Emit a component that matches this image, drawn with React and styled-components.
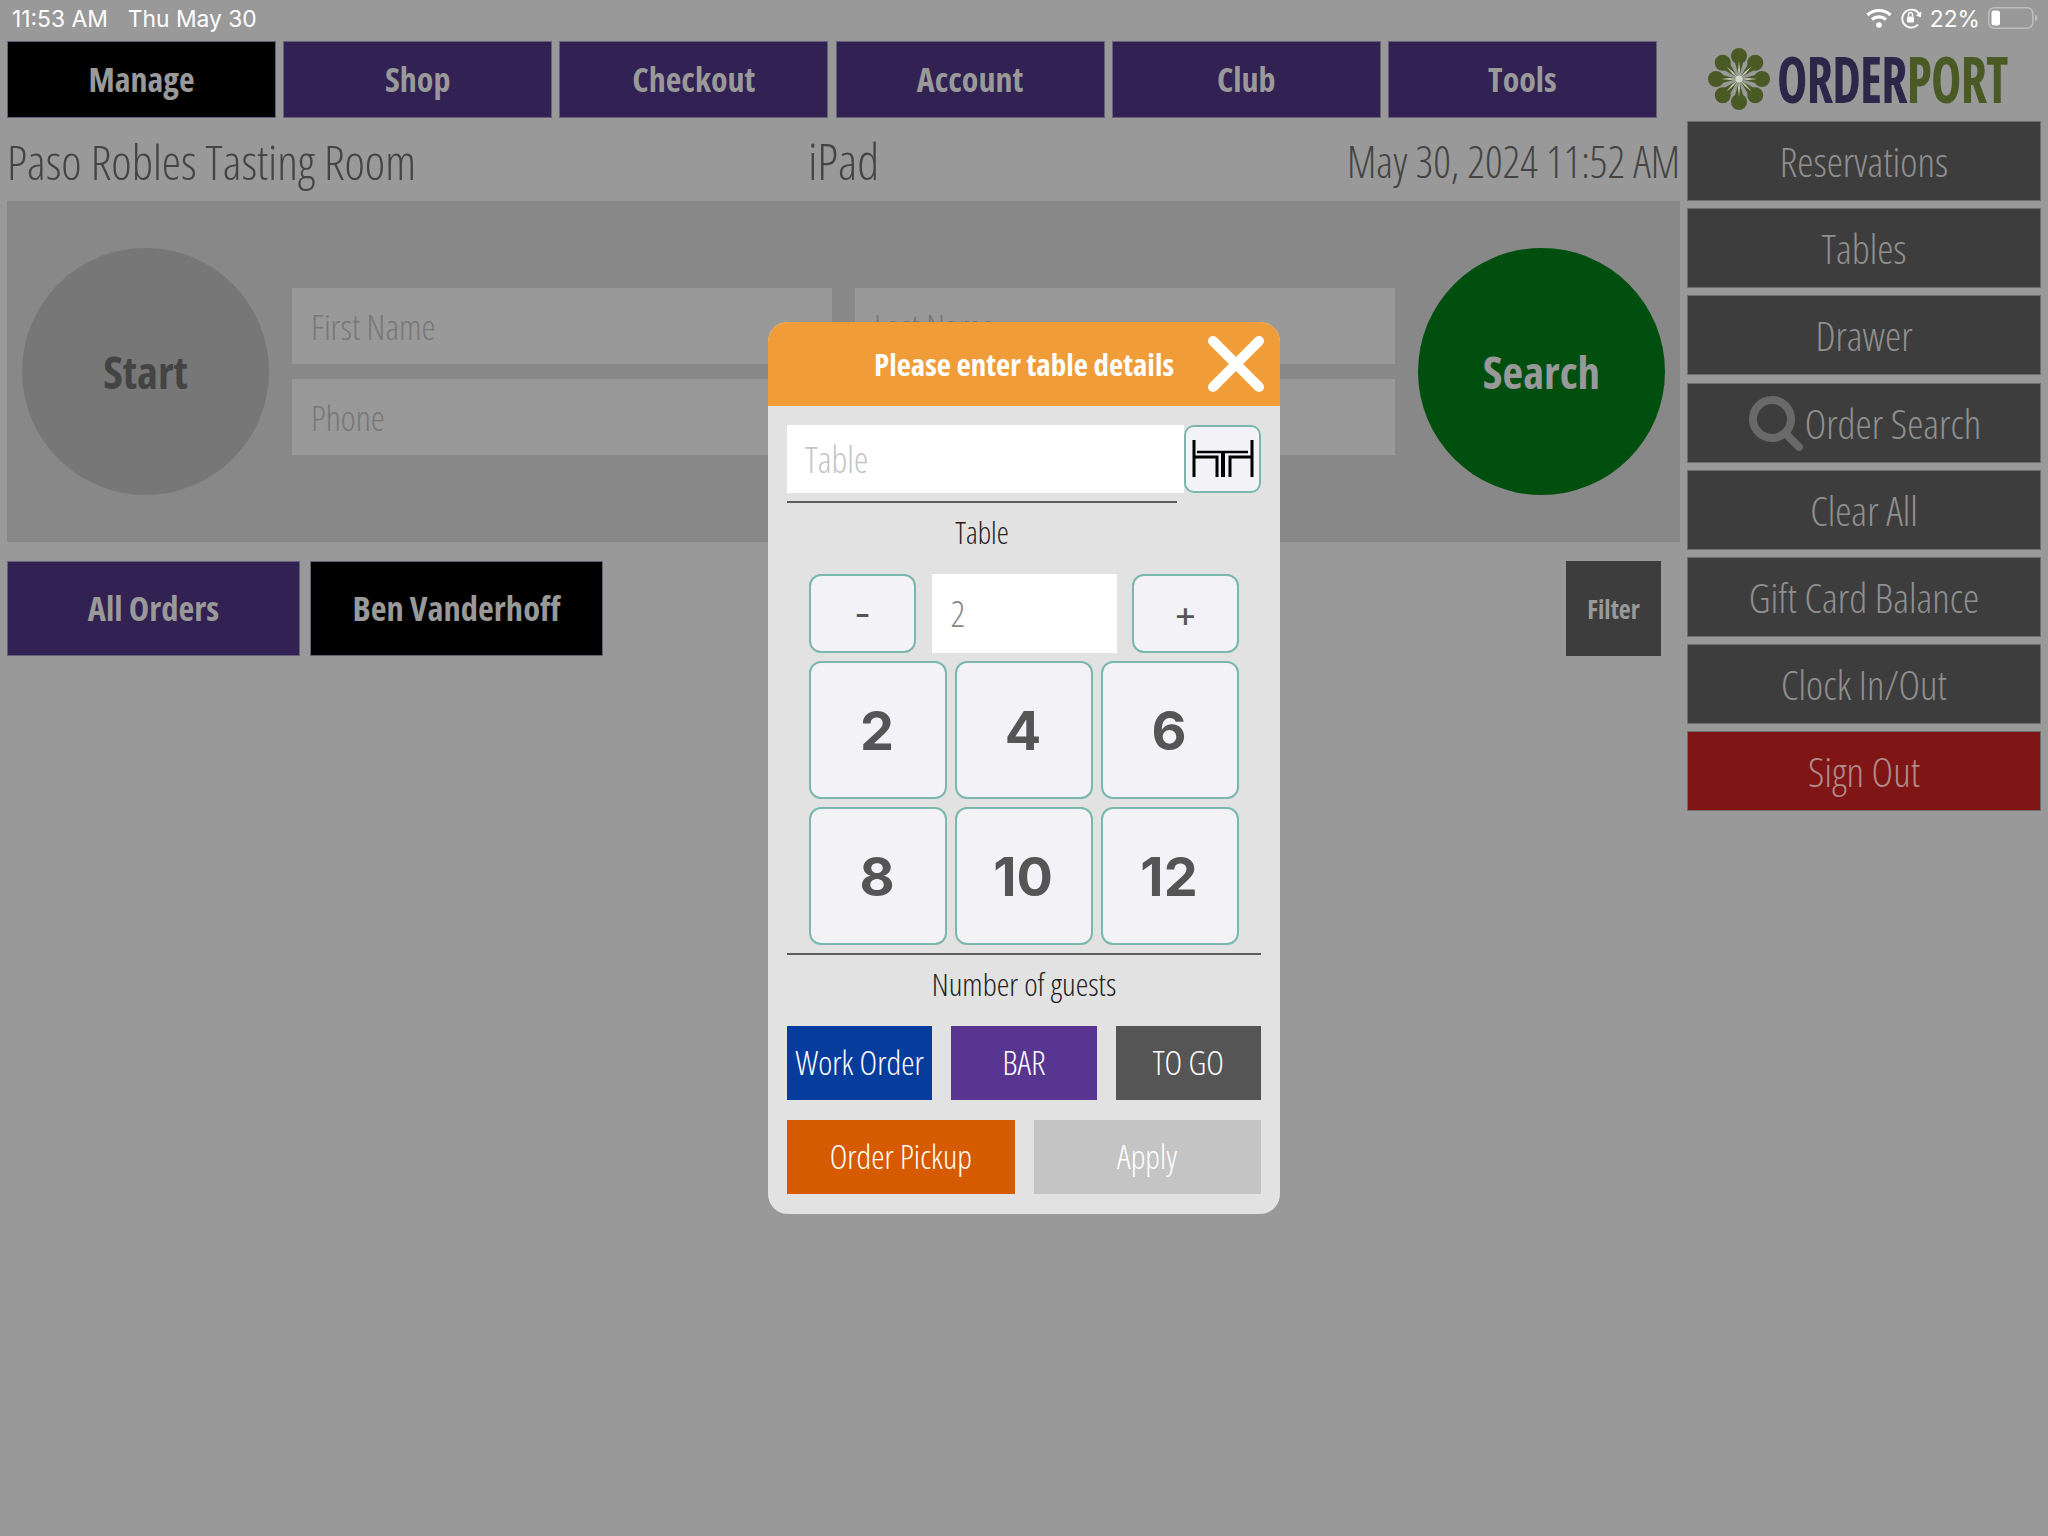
import React from 'react';
import styled, { createGlobalStyle } from 'styled-components';

const GlobalStyle = createGlobalStyle`
  html, body {
    margin: 0;
    padding: 0;
    background: #999;
  }
`;

const condensed = `
  font-family: "Open Sans", "Liberation Sans", sans-serif;
  font-stretch: 75%;
`;

const Page = styled.div`
  position: relative;
  width: 2048px;
  height: 1536px;
  background: #999;
  overflow: hidden;
  ${condensed}
`;

const StatusBar = styled.div`
  display: flex;
  justify-content: space-between;
  align-items: center;
  height: 36px;
  padding: 0 10px 0 12px;
  font-family: Inter, sans-serif;
  font-size: 22.8px;
  color: #fff;
`;

const StatusGroup = styled.div`
  display: flex;
  align-items: center;
  gap: ${(p) => p.$gap}px;
`;

const Main = styled.div`
  display: flex;
  gap: 7px;
  padding: 5px 7px 0 7px;
`;

const LeftColumn = styled.div`
  width: 1673px;
`;

const RightColumn = styled.div`
  width: 354px;
`;

const NavBar = styled.div`
  display: flex;
  gap: 7.2px;
`;

const Tab = styled.div`
  width: 269px;
  height: 77px;
  box-sizing: border-box;
  border: 1px solid #68617a;
  padding-bottom: 2px;
  display: flex;
  align-items: center;
  justify-content: center;
  background: ${(p) => (p.$active ? '#000' : '#322153')};
  color: #999;
  font-size: 34px;
  font-weight: 700;
`;

const InfoRow = styled.div`
  display: flex;
  align-items: center;
  height: 83px;
  padding-top: 3px;
  box-sizing: border-box;
  color: #444;
  font-weight: 300;
`;

const InfoCell = styled.div`
  flex: 1;
  text-align: ${(p) => p.$align};
  font-size: ${(p) => p.$size}px;
  white-space: nowrap;
`;

const SearchPanel = styled.div`
  display: flex;
  align-items: center;
  height: 341px;
  padding: 0 15px 0 15px;
  box-sizing: border-box;
  background: #888;
`;

const RoundButton = styled.div`
  width: 247px;
  height: 247px;
  flex: none;
  border-radius: 50%;
  display: flex;
  align-items: center;
  justify-content: center;
  background: ${(p) => p.$bg};
  color: ${(p) => p.$color};
  font-size: 45px;
  font-weight: 700;
`;

const FieldGrid = styled.div`
  flex: 1;
  display: grid;
  grid-template-columns: 1fr 1fr;
  gap: 15px 23px;
  padding: 0 23px;
`;

const Field = styled.div`
  height: 76px;
  padding-left: 19px;
  display: flex;
  align-items: center;
  background: #999;
  color: #777;
  font-size: 35.5px;
  font-weight: 300;
`;

const OrderRow = styled.div`
  display: flex;
  gap: 10px;
  margin-top: 19px;
`;

const OrderTab = styled.div`
  width: 293px;
  height: 95px;
  box-sizing: border-box;
  border: 1px solid #68617a;
  padding-bottom: 2px;
  display: flex;
  align-items: center;
  justify-content: center;
  background: ${(p) => (p.$dark ? '#000' : '#322153')};
  color: #999;
  font-size: 34.5px;
  font-weight: 700;
`;

const FilterButton = styled.div`
  width: 95px;
  height: 95px;
  margin: 0 19px 0 auto;
  display: flex;
  align-items: center;
  justify-content: center;
  background: #3d3d3d;
  color: #999;
  font-size: 26px;
  font-weight: 700;
`;

const Logo = styled.div`
  height: 75px;
  margin-bottom: 5px;
  display: flex;
  align-items: center;
  gap: 6px;
  padding-left: 20px;
`;

const LogoMark = styled.svg`
  flex: none;
`;

const LogoText = styled.span`
  display: inline-block;
  transform: scaleX(0.79);
  transform-origin: left center;
  font-size: 65px;
  font-weight: 700;
  letter-spacing: -1px;
  line-height: 1;
  color: #2c2648;
`;

const LogoAccent = styled.span`
  color: #4a5a25;
`;

const SideMenu = styled.div`
  display: flex;
  flex-direction: column;
  gap: 7.2px;
`;

const SideItem = styled.div`
  height: 80px;
  box-sizing: border-box;
  border: 1px solid #6e6e6e;
  display: flex;
  align-items: center;
  justify-content: center;
  background: ${(p) => p.$bg || '#3d3d3d'};
  color: ${(p) => p.$color || '#8f8f8f'};
  font-size: 41px;
  font-weight: 300;
`;

const Modal = styled.div`
  position: absolute;
  top: 322px;
  left: 768px;
  width: 512px;
  height: 892px;
  border-radius: 20px;
  overflow: hidden;
  background: #e2e2e2;
`;

const ModalHeader = styled.div`
  position: relative;
  height: 84px;
  display: flex;
  align-items: center;
  justify-content: center;
  background: #f09c38;
  color: #fff;
  font-size: 31px;
  font-weight: 700;
`;

const CloseIcon = styled.svg`
  position: absolute;
  top: 14px;
  right: 16px;
`;

const ModalBody = styled.div`
  padding: 19px;
`;

const TableRow = styled.div`
  display: flex;
  height: 68px;
`;

const TableInput = styled.div`
  flex: 1;
  display: flex;
  align-items: center;
  padding-left: 18px;
  background: #fff;
  color: #c4c4c4;
  font-size: 36px;
  font-weight: 300;
`;

const TableButton = styled.div`
  width: 77px;
  box-sizing: border-box;
  display: flex;
  align-items: center;
  justify-content: center;
  border: 2px solid #7ab7ac;
  border-radius: 10px;
  background: #f2f2f7;
`;

const Rule = styled.div`
  height: 2px;
  background: #5c5c5c;
  margin-top: ${(p) => p.$top || 0}px;
  margin-right: ${(p) => p.$right || 0}px;
`;

const Caption = styled.div`
  text-align: center;
  color: #222;
  font-size: ${(p) => p.$size}px;
  font-weight: 300;
  line-height: 40px;
  margin-top: 9px;
  margin-right: ${(p) => p.$right || 0}px;
`;

const Stepper = styled.div`
  display: grid;
  grid-template-columns: 107px 185px 107px;
  justify-content: space-between;
  height: 79px;
  margin: 22px 22px 8px;
`;

const StepButton = styled.div`
  box-sizing: border-box;
  display: flex;
  align-items: center;
  justify-content: center;
  border: 2px solid #7ab7ac;
  border-radius: 12px;
  background: #f2f2f7;
  color: #555;
  font-family: Inter, sans-serif;
  font-size: 36px;
`;

const GuestInput = styled.div`
  display: flex;
  align-items: center;
  padding-left: 19px;
  background: #fff;
  color: #888;
  font-size: 36px;
  font-weight: 300;
`;

const GuestGrid = styled.div`
  display: grid;
  grid-template-columns: repeat(3, 138px);
  grid-auto-rows: 138px;
  gap: 8px;
  margin: 0 22px 8px;
`;

const GuestButton = styled.div`
  box-sizing: border-box;
  padding-right: 2px;
  display: flex;
  align-items: center;
  justify-content: center;
  border: 2px solid #7ab7ac;
  border-radius: 12px;
  background: #f2f2f7;
  color: #555;
  font-family: Inter, sans-serif;
  font-size: 54px;
  font-weight: 700;
`;

const ActionRow = styled.div`
  display: flex;
  gap: 19px;
  margin-top: ${(p) => p.$top}px;
`;

const ActionButton = styled.div`
  flex: 1;
  height: 74px;
  padding-bottom: 2px;
  box-sizing: border-box;
  display: flex;
  align-items: center;
  justify-content: center;
  background: ${(p) => p.$bg};
  color: #fff;
  font-size: 33.5px;
  font-weight: 300;
  white-space: nowrap;
`;

const Flower = () => {
  const petals = [0, 45, 90, 135, 180, 225, 270, 315];
  return (
    <LogoMark width="64" height="64" viewBox="0 0 64 64">
      {petals.map((a) => (
        <g key={a} transform={`rotate(${a} 32 32)`}>
          <path d="M32 30 L27.5 14 L36.5 14 Z" fill="#4a5a25" />
          <circle cx="32" cy="9" r="8" fill="#4a5a25" />
          <path d="M32 32 L31 23 L32 14 L33 23 Z" fill="#c4c7b8" />
        </g>
      ))}
      <circle cx="32" cy="32" r="3.6" fill="#d4d6ca" />
    </LogoMark>
  );
};

const TableIcon = () => (
  <svg width="62" height="38" viewBox="0 0 62 38" fill="none" stroke="#000" strokeWidth="3">
    <path d="M2 0V37M2 17H25V37" />
    <path d="M5 12H56" strokeWidth="2.6" />
    <path d="M31 12V37" strokeWidth="4" />
    <path d="M60 0V37M60 17H38V37" />
  </svg>
);

const WifiIcon = () => (
  <svg width="26" height="20" viewBox="0 0 26 20" fill="none" stroke="#fff" strokeWidth="3.2">
    <path d="M1.5 7C8 1 18 1 24.5 7" />
    <path d="M6 11.5C10 8 16 8 20 11.5" />
    <circle cx="13" cy="17" r="2.8" fill="#fff" stroke="none" />
  </svg>
);

const RotationIcon = () => (
  <svg width="22" height="22" viewBox="0 0 22 22" fill="none" stroke="#fff" strokeWidth="1.8">
    <path d="M18 17.5A9 9 0 1 1 19.5 8" />
    <path d="M20.5 5L20 9L16.5 8" />
    <rect x="7" y="9.5" width="7" height="6" rx="1" fill="#fff" stroke="none" />
    <path d="M8.5 9.5V7.5a2 2 0 0 1 4 0V9.5" strokeWidth="1.3" />
  </svg>
);

const BatteryIcon = () => (
  <svg width="50" height="22" viewBox="0 0 50 22">
    <rect x="0.75" y="0.75" width="44" height="20.5" rx="5.5" fill="none" stroke="#bdbdbd" strokeWidth="1.5" />
    <rect x="3.5" y="3.5" width="8.5" height="15" rx="2.5" fill="#fff" />
    <path d="M47 7.5C48.8 8.2 49.4 9.5 49.4 11S48.8 13.8 47 14.5Z" fill="#bdbdbd" />
  </svg>
);

const SearchGlass = () => (
  <svg width="58" height="58" viewBox="0 0 58 58" fill="none" stroke="#696969">
    <circle cx="25" cy="25" r="19" strokeWidth="8" />
    <path d="M39 40L52 53" strokeWidth="8" strokeLinecap="round" />
  </svg>
);

const navTabs = ['Manage', 'Shop', 'Checkout', 'Account', 'Club', 'Tools'];
const sideItems = ['Reservations', 'Tables', 'Drawer', 'Order Search', 'Clear All', 'Gift Card Balance', 'Clock In/Out'];

const App = () => {
  return (
    <Page>
      <GlobalStyle />
      <StatusBar>
        <StatusGroup $gap={20}>
          <span>11:53 AM</span>
          <span>Thu May 30</span>
        </StatusGroup>
        <StatusGroup $gap={8}>
          <WifiIcon />
          <RotationIcon />
          <span>22%</span>
          <BatteryIcon />
        </StatusGroup>
      </StatusBar>
      <Main>
        <LeftColumn>
          <NavBar>
            {navTabs.map((t, i) => (
              <Tab key={t} $active={i === 0}>{t}</Tab>
            ))}
          </NavBar>
          <InfoRow>
            <InfoCell $align="left" $size={48.5}>Paso Robles Tasting Room</InfoCell>
            <InfoCell $align="center" $size={50}>iPad</InfoCell>
            <InfoCell $align="right" $size={43.3}>May 30, 2024 11:52 AM</InfoCell>
          </InfoRow>
          <SearchPanel>
            <RoundButton $bg="#777" $color="#444">Start</RoundButton>
            <FieldGrid>
              <Field>First Name</Field>
              <Field>Last Name</Field>
              <Field>Phone</Field>
              <Field />
            </FieldGrid>
            <RoundButton $bg="#004f0f" $color="#999">Search</RoundButton>
          </SearchPanel>
          <OrderRow>
            <OrderTab>All Orders</OrderTab>
            <OrderTab $dark>Ben Vanderhoff</OrderTab>
            <FilterButton>Filter</FilterButton>
          </OrderRow>
        </LeftColumn>
        <RightColumn>
          <Logo>
            <Flower />
            <LogoText>ORDER<LogoAccent>PORT</LogoAccent></LogoText>
          </Logo>
          <SideMenu>
            {sideItems.map((s) => (
              <SideItem key={s}>
                {s === 'Order Search' && <SearchGlass />}
                {s}
              </SideItem>
            ))}
            <SideItem $bg="#801515" $color="#b08a8a">Sign Out</SideItem>
          </SideMenu>
        </RightColumn>
      </Main>
      <Modal>
        <ModalHeader>
          Please enter table details
          <CloseIcon width="56" height="56" viewBox="0 0 56 56" stroke="#fff" strokeWidth="10" strokeLinecap="round">
            <path d="M5 5L51 51M51 5L5 51" />
          </CloseIcon>
        </ModalHeader>
        <ModalBody>
          <TableRow>
            <TableInput>Table</TableInput>
            <TableButton><TableIcon /></TableButton>
          </TableRow>
          <Rule $top={8} $right={84} />
          <Caption $right={84} $size={30.5}>Table</Caption>
          <Stepper>
            <StepButton>-</StepButton>
            <GuestInput>2</GuestInput>
            <StepButton>+</StepButton>
          </Stepper>
          <GuestGrid>
            {[2, 4, 6, 8, 10, 12].map((n) => (
              <GuestButton key={n}>{n}</GuestButton>
            ))}
          </GuestGrid>
          <Rule />
          <Caption $size={32}>Number of guests</Caption>
          <ActionRow $top={22}>
            <ActionButton $bg="#063c9c">Work Order</ActionButton>
            <ActionButton $bg="#573591">BAR</ActionButton>
            <ActionButton $bg="#555">TO GO</ActionButton>
          </ActionRow>
          <ActionRow $top={20}>
            <ActionButton $bg="#d65a00">Order Pickup</ActionButton>
            <ActionButton $bg="#c4c4c4">Apply</ActionButton>
          </ActionRow>
        </ModalBody>
      </Modal>
    </Page>
  );
};

export default App;
